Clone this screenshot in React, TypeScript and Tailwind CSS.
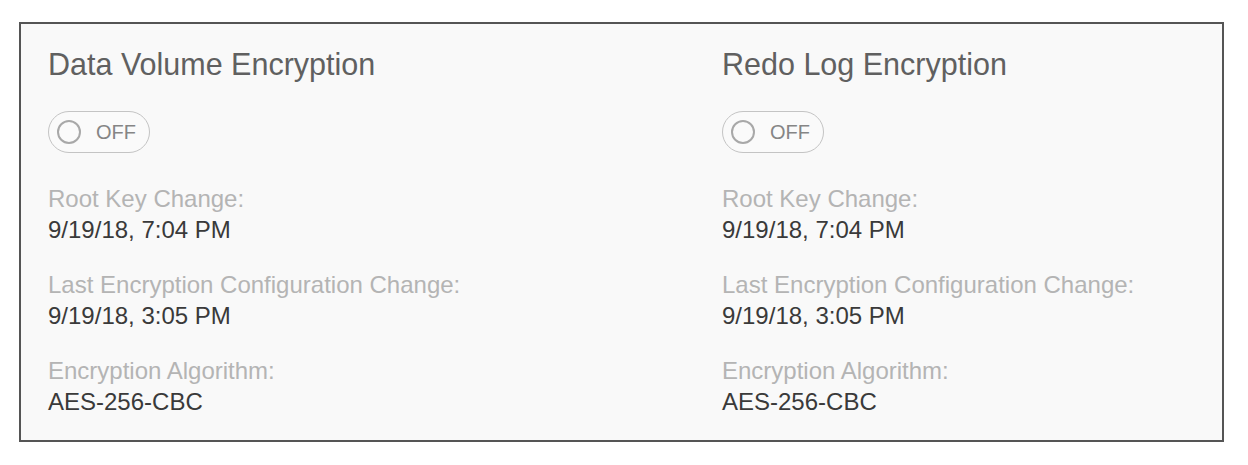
import { useState } from 'react'

type Field = { label: string; value: string }

const fields: Field[] = [
  { label: 'Root Key Change:', value: '9/19/18, 7:04 PM' },
  { label: 'Last Encryption Configuration Change:', value: '9/19/18, 3:05 PM' },
  { label: 'Encryption Algorithm:', value: 'AES-256-CBC' },
]

function Toggle({ on }: { on: boolean }) {
  return (
    <div className="flex items-center w-[102px] h-[42px] rounded-full border-[1.5px] border-[#c4c4c4] bg-[#fafafa] pl-[8px]">
      <span className="block w-[24px] h-[24px] rounded-full border-[2.5px] border-[#a8a8a8]" />
      <span className="ml-[15px] text-[20px] leading-none text-[#858585]">{on ? 'ON' : 'OFF'}</span>
    </div>
  )
}

function Section({ title }: { title: string }) {
  const [on] = useState(false)
  return (
    <div>
      <h2 className="text-[30.5px] leading-[36px] text-[#606060] font-normal">{title}</h2>
      <div className="mt-[29px]">
        <Toggle on={on} />
      </div>
      <div className="mt-[30px] flex flex-col gap-[24px]">
        {fields.map((f) => (
          <div key={f.label} className="text-[24px] leading-[31px]">
            <p className="text-[#b4b4b4]">{f.label}</p>
            <p className="text-[#3a3a3a]">{f.value}</p>
          </div>
        ))}
      </div>
    </div>
  )
}

export default function App() {
  return (
    <div className="w-[1248px] h-[465px] bg-white pt-[22px] pl-[19px] font-['Liberation_Sans',Arial,sans-serif]">
      <div className="w-[1205px] h-[420px] border-2 border-[#555555] bg-[#f9f9f9] pt-[22px] pl-[27px] grid grid-cols-[674px_1fr]">
        <Section title="Data Volume Encryption" />
        <Section title="Redo Log Encryption" />
      </div>
    </div>
  )
}
